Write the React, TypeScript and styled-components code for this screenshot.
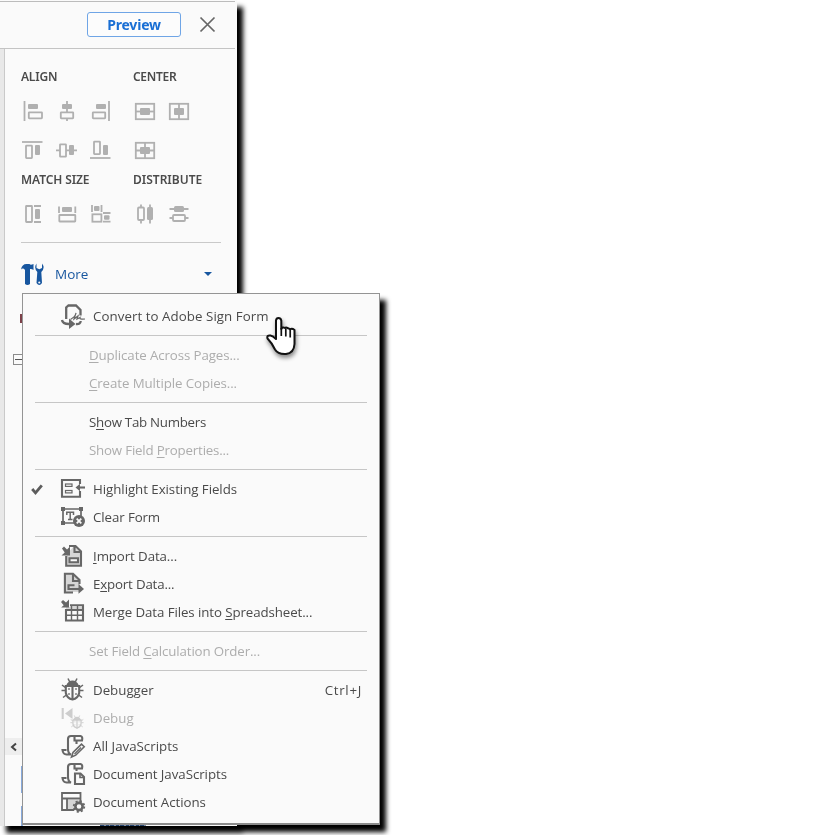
import React from 'react';
import styled, { createGlobalStyle } from 'styled-components';

const GlobalStyle = createGlobalStyle`
  * { box-sizing: border-box; }
  body {
    margin: 0;
    background: #fff;
    overflow: hidden;
    font-family: "Open Sans", "Noto Sans", sans-serif;
  }
`;

const Stage = styled.div`
  position: relative;
  width: 829px;
  height: 835px;
  overflow: hidden;
`;

const Floating = styled.div`
  position: relative;
  width: 381px;
  height: 826px;
  filter: drop-shadow(6.5px 7px 2.8px #000);
`;

const Panel = styled.aside`
  display: flex;
  flex-direction: column;
  width: 237px;
  height: 826px;
  background: #fafafa;
`;

const Header = styled.header`
  display: flex;
  align-items: center;
  height: 48px;
  flex: none;
  width: 235px;
  margin-top: 1px;
  padding-left: 87px;
  border-top: 1px solid #bcbcbc;
  border-bottom: 1px solid #c4c4c4;
`;

const PreviewButton = styled.button`
  width: 94px;
  height: 25px;
  margin-top: -2px;
  padding: 0;
  border: 1px solid #6fa5e6;
  border-radius: 3px;
  background: #fcfcfc;
  color: #1a6fd4;
  font: 700 14px/23px "Noto Sans", sans-serif;
  letter-spacing: -0.2px;
`;

const CloseButton = styled.button`
  display: flex;
  padding: 0;
  margin: -2px 0 0 18px;
  border: 0;
  background: none;
`;

const Body = styled.div`
  display: flex;
  flex: 1;
  min-height: 0;
`;

const Rail = styled.div`
  width: 5px;
  background: #e8e8e8;
  border-right: 1px solid #c9c9c9;
`;

const Content = styled.div`
  flex: 1;
  display: flex;
  flex-direction: column;
  overflow: hidden;
`;

const ToolGrid = styled.div`
  display: grid;
  grid-template-columns: 112px 88px;
  margin: 0 16px;
  padding-top: 20px;
  height: 194px;
  border-bottom: 1px solid #c9c9c9;
  align-content: start;
`;

const GroupTitle = styled.h3<{ $track: number }>`
  margin: 0 0 14px;
  height: 16px;
  font-family: "Noto Sans", sans-serif;
  font-size: 12px;
  line-height: 16px;
  font-weight: 600;
  color: #4b4b4b;
  white-space: nowrap;
  letter-spacing: ${(p) => p.$track}px;
`;

const Group = styled.section<{ $height: number }>`
  height: ${(p) => p.$height}px;
`;

const IconGrid = styled.div`
  display: grid;
  grid-template-columns: repeat(auto-fill, 24px);
  column-gap: 10px;
  row-gap: 15px;
`;

const ToolIcon = styled.svg`
  display: block;
  width: 24px;
  height: 24px;
  fill: none;
  stroke: #b0b0b0;
  stroke-width: 1.8;
  .s { fill: #b0b0b0; stroke: none; }
`;

const MoreRow = styled.div`
  display: flex;
  align-items: center;
  height: 30px;
  margin: 16px 16px 0;
  color: #17569f;
  font-size: 13.5px;
`;

const MoreLabel = styled.span`
  margin-left: 10px;
  flex: 1;
`;

const Caret = styled.span`
  margin-right: 9px;
  border: 4.5px solid transparent;
  border-top-color: #17569f;
  border-bottom: 0;
`;

const RedMark = styled.div`
  width: 3px;
  height: 9px;
  margin: 25px 0 0 15px;
  background: #7c4048;
`;

const TreeToggle = styled.div`
  width: 11px;
  height: 11px;
  margin: 31px 0 0 8px;
  border: 1px solid #8b8b8b;
  display: flex;
  align-items: center;
  &::after { content: ""; width: 9px; height: 1px; margin-left: 1px; background: #555; }
`;

const ScrollLeft = styled.div`
  width: 17px;
  height: 17px;
  margin-top: 373px;
  flex: none;
  display: flex;
  justify-content: center;
  align-items: center;
  background: #eee;
`;

const FieldEdge = styled.div<{ $gap: number; $height: number }>`
  width: 2px;
  height: ${(p) => p.$height}px;
  flex: none;
  margin: ${(p) => p.$gap}px 0 0 16px;
  background: #86a9dc;
`;

const LinkRow = styled.div`
  width: 46px;
  height: 2px;
  flex: none;
  margin: -2px 0 0 95px;
  background: repeating-linear-gradient(90deg, #23446f 0 4px, #7d8ea5 4px 6px, #23446f 6px 9px, #8a93a0 9px 10px);
`;

const Menu = styled.div`
  position: absolute;
  left: 22px;
  top: 293px;
  width: 358px;
  height: 532px;
  padding-top: 8px;
  background: #fafafa;
  border: 1px solid #949494;
  border-bottom: 2px solid #8c8c8c;
`;

const Divider = styled.hr`
  height: 1px;
  margin: 5px 12px;
  border: 0;
  background: #c6c6c6;
`;

const Item = styled.div<{ $disabled?: boolean }>`
  display: flex;
  align-items: center;
  height: 28px;
  padding-right: 17px;
  font-size: 13.3px;
  line-height: 18px;
  white-space: nowrap;
  color: ${(p) => (p.$disabled ? '#adadad' : '#4a4a4a')};
  u { text-underline-offset: 2px; text-decoration-thickness: 1px; }
`;

const CheckSlot = styled.span`
  width: 37px;
  height: 28px;
`;

const Label = styled.span<{ $indent: number; $track: number }>`
  margin-left: ${(p) => p.$indent}px;
  letter-spacing: ${(p) => p.$track}px;
`;

const Shortcut = styled.span`
  margin-left: auto;
  letter-spacing: 0.7px;
`;

const MenuIcon = styled.svg<{ $faded?: boolean }>`
  display: block;
  width: 28px;
  height: 28px;
  fill: none;
  stroke: #676767;
  stroke-width: 2.1;
  opacity: ${(p) => (p.$faded ? 0.3 : 1)};
  .s { fill: #676767; stroke: none; }
  .l { fill: #d6d6d6; stroke: none; }
  .b { fill: #fafafa; }
  .n { stroke-width: 1.2; }
  .w { stroke: #fafafa; }
`;

const Pointer = styled.svg`
  position: absolute;
  left: 262px;
  top: 312px;
  filter: drop-shadow(1px 3px 2px rgba(0, 0, 0, 0.45));
`;

const alignIcons = [
  <><path d="M3.5 2v20" /><rect className="s" x="7" y="5" width="10" height="5" rx="1" /><rect x="7.8" y="13.3" width="13.2" height="6" rx=".5" /></>,
  <><path d="M12 2v11M12 19v3" /><rect className="s" x="7" y="5" width="10" height="5" rx="1" /><rect x="5.8" y="13.3" width="12.4" height="6" rx=".5" /></>,
  <><path d="M20 2v20" /><rect className="s" x="7" y="5" width="10" height="5" rx="1" /><rect x="3.8" y="13.3" width="12.4" height="6" rx=".5" /></>,
  <><path d="M1 4h20.5" /><rect x="5" y="7.7" width="6" height="12.4" rx=".5" /><rect className="s" x="14" y="7" width="5" height="10" rx="1" /></>,
  <><path d="M1 12.3h4M11 12.3h11" /><rect x="5" y="6.3" width="6" height="12.4" rx=".5" /><rect className="s" x="14" y="7" width="5" height="10" rx="1" /></>,
  <><path d="M1 20h20.5" /><rect x="5" y="3.7" width="6" height="12.4" rx=".5" /><rect className="s" x="14" y="7" width="5" height="10" rx="1" /></>,
];

const centerIcons = [
  <><rect x="2.8" y="4.8" width="18.4" height="15.4" /><path d="M2 12.5h20" /><rect className="s" x="7" y="9" width="10" height="7" rx="1" /></>,
  <><rect x="2.8" y="4.8" width="18.4" height="15.4" /><path d="M12 4v16" /><rect className="s" x="7" y="9" width="10" height="7" rx="1" /></>,
  <><rect x="2.8" y="4.8" width="18.4" height="15.4" /><path d="M2 12.5h20M12 4v16" /><rect className="s" x="7" y="9" width="10" height="7" rx="1" /></>,
];

const matchIcons = [
  <><rect x="5" y="4" width="6" height="16" rx=".5" /><rect className="s" x="14" y="7" width="5" height="10" rx="1" /><path d="M13 4h7M13 20h7" /></>,
  <><path d="M4 4.5v6.5M20.3 4.5v6.5" /><rect className="s" x="7" y="5" width="10" height="5" rx="1" /><rect x="4.3" y="13" width="16" height="6.5" rx=".5" /></>,
  <><path d="M3 3v7M12.5 3v7M14 11h7.5M14 19.7h7.5" /><rect className="s" x="5" y="4" width="5.5" height="5" rx="1" /><rect x="3.4" y="12.3" width="9" height="7.4" /><rect className="s" x="15" y="13.2" width="5.5" height="4.5" rx="1" /></>,
];

const distributeIcons = [
  <><path d="M8 2.5v3M8 18v3.5M17 2.5v19" /><rect x="5" y="5.5" width="6" height="12.5" rx="1" /><rect className="s" x="14" y="5" width="6" height="13" rx="1.5" /></>,
  <><path d="M2.5 7h19M2.5 16h3.5M18 16h3.5" /><rect className="s" x="7" y="4" width="10" height="6" rx="1.5" /><rect x="6" y="13" width="12" height="6" rx="1" /></>,
];

const scroll = 'M8 18V7Q8 4 11 4H20.5Q23 4.5 22 8.5H14.5V5M16.5 9V12M6.5 18H2.5Q3 22.5 6.5 22.5H11Q8 21.5 8 17';

const Bug = () => (
  <>
    <path d="M8 2.5l2 4M17 2.5l-2 4M2 9l4 3M23 9l-4 3M1.5 14.5h4M23.5 14.5h-4M3 21.5l4-3M22 21.5l-4-3" strokeWidth="1.5" />
    <path className="s" d="M6 10Q8 4.5 12.5 4.5T19 10z" />
    <path d="M5.8 10H19.2V17Q18 22.5 12.5 23.5Q7 22.5 5.8 17Z" />
    <path d="M12.5 9v15" />
    <path className="n" d="M9 12v2M9 17v2M16 12v2M16 17v2" />
  </>
);

const icons: Record<string, React.ReactNode> = {
  sign: <><path d="M6.2 17V5.5L8.5 3.5H16L20.5 8V13.5M2 18Q2.5 22 9 22M16 22Q20.5 22.5 20.7 19" strokeWidth="2.3" /><path className="s" d="M9 16.5l6.5 5.5-6.5 5z" /><path className="n" d="M10.5 17.500q5-3 5.500-6.500l-2 6 4-3-1 3 3-1.500q-1 2 5 1.500" /></>,
  highlight: <><path d="M20 9V5H2V21.8H20V16" /><path d="M17.5 12.5H25" /><path className="s" d="M15.5 12.5l4.500-3.800v7.600z" /><rect className="n" x="5.5" y="9" width="6.5" height="2.4" /><rect className="n" x="5.5" y="15.5" width="6.5" height="2.4" /></>,
  clear: <><path d="M3 6H21V20H3Z" strokeWidth="1.7" /><path className="s" d="M1 4h4v4H1zM19 4h4v4h-4zM1 18h4v4H1z" /><path d="M6.8 12V9.3H13.5V12M10.2 9V16M8 16.5h4.500" strokeWidth="1.5" /><circle className="s" cx="19" cy="18" r="6" /><path className="w" d="M16.7 15.7l4.600 4.600M21.3 15.7l-4.600 4.600" strokeWidth="1.8" /></>,
  import: <><path className="l" d="M7 12l7-8 7 7v13H7z" /><path d="M6.2 14V23.7H21V9.5L15.5 4H9M14.5 4v6H21" /><path className="b" d="M9.5 16.3h8.500v4H9.5z" /><path className="s" d="M10 4.5v9H1.5l3.200-3L2 6.5l2-2 3 3z" /></>,
  export: <><path className="l" d="M5 4h8l7 8v10H5z" /><path d="M13 22.5H4.9V3.7H13L19.5 10V14M13 4v7h6M14.5 15.3H8.5v3.700H14" /><path d="M12 19h9" /><path className="s" d="M18.5 14l5.500 5-5.500 4.700z" /></>,
  merge: <><path className="l" d="M6 9h17v4H6z" /><path d="M10 7.2H23V22.5H6V11M6 12H23" /><path d="M6 17.3H23M11.5 8V22M17.5 8V22" strokeWidth="1.4" /><path className="s" d="M9 1.5v8H1.2l2.500-2.300L1 4l2-2 3 2.500z" /></>,
  bug: <Bug />,
  debug: <><path d="M2.7 4v11" /><path className="s" d="M12.5 4v11L5 9.5z" /><g transform="translate(9.5 10) scale(.6)"><Bug /></g></>,
  scripts: <><path d={scroll} /><path className="b" d="M11.5 25l1.500-4.500 8.500-8.300 2.700 2.500-8.500 8.500z" strokeWidth="1.6" /><path className="n" d="M14.5 22l6.500-6.500" /></>,
  docScripts: <><path d={scroll} /><path className="w" d="M15 13.500h5.500l3.500 3.500v7H15z" strokeWidth="5" /><path className="b" d="M15 13.500h5.500l3.500 3.500v7H15z" /><path d="M20 13.500v4h4" strokeWidth="1.6" /></>,
  actions: <><path className="l" d="M7 12h15v9H7z" /><path d="M20.5 14V5H2V22H14M2 10.5H20.5M7 10V22" strokeWidth="1.8" /><circle cx="19" cy="18.5" r="3.6" strokeWidth="2.6" className="b" /><circle cx="19" cy="18.5" r="5.3" strokeWidth="1.8" strokeDasharray="2.1 2.06" /></>,
};

type Entry = { text: React.ReactNode; icon?: string; disabled?: boolean; checked?: boolean; shortcut?: string; track?: number };

const sections: Entry[][] = [
  [{ text: 'Convert to Adobe Sign Form', icon: 'sign', track: 0.06 }],
  [
    { text: <><u>D</u>uplicate Across Pages...</>, disabled: true, track: -0.11 },
    { text: <><u>C</u>reate Multiple Copies...</>, disabled: true, track: -0.1 },
  ],
  [
    { text: <>S<u>h</u>ow Tab Numbers</>, track: -0.27 },
    { text: <>Show Field <u>P</u>roperties...</>, disabled: true, track: -0.19 },
  ],
  [
    { text: 'Highlight Existing Fields', icon: 'highlight', checked: true, track: -0.05 },
    { text: 'Clear Form', icon: 'clear', track: -0.1 },
  ],
  [
    { text: <><u>I</u>mport Data...</>, icon: 'import', track: -0.1 },
    { text: <>E<u>x</u>port Data...</>, icon: 'export', track: -0.17 },
    { text: <>Merge Data Files into <u>S</u>preadsheet...</>, icon: 'merge', track: -0.09 },
  ],
  [{ text: <>Set Field <u>C</u>alculation Order...</>, disabled: true, track: -0.13 }],
  [
    { text: 'Debugger', icon: 'bug', shortcut: 'Ctrl+J' },
    { text: 'Debug', icon: 'debug', disabled: true },
    { text: 'All JavaScripts', icon: 'scripts' },
    { text: 'Document JavaScripts', icon: 'docScripts', track: -0.05 },
    { text: 'Document Actions', icon: 'actions', track: -0.05 },
  ],
];

function ToolGroup({ title, items, height, track }: { title: string; items: React.ReactNode[]; height: number; track: number }) {
  return (
    <Group $height={height}>
      <GroupTitle $track={track}>{title}</GroupTitle>
      <IconGrid>
        {items.map((item, i) => <ToolIcon key={i} viewBox="0 0 24 24">{item}</ToolIcon>)}
      </IconGrid>
    </Group>
  );
}

function MenuRow({ entry }: { entry: Entry }) {
  return (
    <Item $disabled={entry.disabled}>
      <CheckSlot>
        {entry.checked && (
          <svg width="22" height="28" viewBox="0 0 22 28">
            <path d="M9.2 14l3.300 3.800 6.300-7.500" fill="none" stroke="#5c5c5c" strokeWidth="2.8" />
          </svg>
        )}
      </CheckSlot>
      {entry.icon && <MenuIcon viewBox="0 0 28 28" $faded={entry.disabled}>{icons[entry.icon]}</MenuIcon>}
      <Label $indent={entry.icon ? 5 : 29} $track={entry.track ?? 0}>{entry.text}</Label>
      {entry.shortcut && <Shortcut>{entry.shortcut}</Shortcut>}
    </Item>
  );
}

export default function App() {
  return (
    <Stage>
      <GlobalStyle />
      <Floating>
        <Panel>
          <Header>
            <PreviewButton>Preview</PreviewButton>
            <CloseButton aria-label="Close">
              <svg width="17" height="17" viewBox="0 0 17 17"><path d="M1.5 1.5l14 14M15.5 1.5l-14 14" stroke="#666" strokeWidth="1.7" /></svg>
            </CloseButton>
          </Header>
          <Body>
            <Rail />
            <Content>
              <ToolGrid>
                <ToolGroup title="ALIGN" items={alignIcons} height={103} track={-0.2} />
                <ToolGroup title="CENTER" items={centerIcons} height={103} track={-0.3} />
                <ToolGroup title="MATCH SIZE" items={matchIcons} height={70} track={-0.1} />
                <ToolGroup title="DISTRIBUTE" items={distributeIcons} height={70} track={0} />
              </ToolGrid>
              <MoreRow>
                <svg width="24" height="24" viewBox="0 0 24 24" fill="#17569f">
                  <path d="M0 7.5Q1 2 5.5 2H8.5Q9.5 3.5 12.5 2V8Q10.5 6.5 9 7V22Q6.5 24 4 22V8Q2 5.5 0 7.5z" />
                  <path d="M15.5 1.5Q12.5 6 16.3 10L15.5 21Q18.3 25 21 21L20.3 10Q24.5 6 21 1.5V6L18.3 7.3L15.5 6z" />
                  <circle cx="18.3" cy="20.5" r="1.1" fill="#fafafa" />
                </svg>
                <MoreLabel>More</MoreLabel>
                <Caret />
              </MoreRow>
              <RedMark />
              <TreeToggle />
              <ScrollLeft>
                <svg width="9" height="10" viewBox="0 0 9 10"><path d="M7 1.5L3 5l4 3.500" fill="none" stroke="#444" strokeWidth="2" /></svg>
              </ScrollLeft>
              <FieldEdge $gap={11} $height={27} />
              <FieldEdge $gap={13} $height={20} />
              <LinkRow />
            </Content>
          </Body>
        </Panel>
        <Menu>
          {sections.map((entries, i) => (
            <React.Fragment key={i}>
              {i > 0 && <Divider />}
              {entries.map((entry, j) => <MenuRow key={j} entry={entry} />)}
            </React.Fragment>
          ))}
        </Menu>
      </Floating>
      <Pointer width="38" height="46" viewBox="0 0 38 46">
        <path d="M14 27V8.5Q14.3 6 16.5 6T19.3 8.5V17Q20.5 14.5 23 16Q24 15 26 16.3Q27 16.5 28 17.3Q30 16 32.5 18V32Q32 41 24 42Q16 42.5 13 37.5Q10 31 5.5 26.5Q4.5 23 8.5 23.5Q11 24 14 27Z" fill="#fff" stroke="#111" strokeWidth="2" strokeLinejoin="round" />
        <path d="M19.3 16v8M23.8 16.5v8M28.2 17.5v8" stroke="#111" strokeWidth="1.7" />
      </Pointer>
    </Stage>
  );
}
